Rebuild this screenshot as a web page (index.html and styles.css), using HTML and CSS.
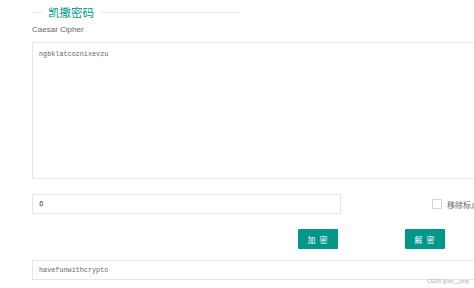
FILE: index.html
```html
<!DOCTYPE html>
<html lang="zh-CN">
<head>
    <meta charset="UTF-8">
    <meta name="viewport" content="width=device-width, initial-scale=1.0">
    <title>凯撒密码</title>
    <link rel="stylesheet" href="styles.css">
</head>
<body>
    <div class="page">
        <fieldset class="field-title">
            <legend>凯撒密码</legend>
        </fieldset>

        <label class="form-label" for="source">Caesar Cipher</label>
        <textarea id="source" class="text-box">ngbklatcoznixevzu</textarea>

        <div class="key-row">
            <input type="text" class="text-input key-input" value="6">
            <label class="check">
                <span class="check-box"></span>
                <span class="check-text">移除标点</span>
            </label>
        </div>

        <div class="btn-row">
            <button class="btn btn-encrypt">加 密</button>
            <button class="btn btn-decrypt">解 密</button>
        </div>

        <input type="text" class="text-input result-input" value="havefunwithcrypto">
    </div>

    <div class="watermark">CSDN @lxx__ying</div>
</body>
</html>
```

FILE: styles.css
```css
html, body {
    margin: 0;
    padding: 0;
    background-color: #fff;
    overflow: hidden;
}
body {
    font-family: 'Liberation Sans', Arial, 'Noto Sans CJK SC', sans-serif;
    width: 474px;
    height: 288px;
    position: relative;
}
.page {
    padding-left: 32px;
    width: 480px;
}
.field-title {
    margin: 3px 0 0;
    padding: 0;
    width: 208px;
    border: none;
    border-top: 1px solid #eee;
}
.field-title legend {
    margin-left: 11px;
    padding: 0 5px;
    font-size: 11.5px;
    line-height: 19px;
    color: #009688;
    font-family: 'Noto Sans CJK SC', sans-serif;
}
.form-label {
    display: block;
    margin-top: 3px;
    font-size: 8px;
    line-height: 10px;
    color: #666;
}
.text-box {
    display: block;
    box-sizing: border-box;
    margin-top: 7px;
    width: 460px;
    height: 137px;
    padding: 6px 6px;
    border: 1px solid #e6e6e6;
    resize: none;
    outline: none;
    font-family: 'Liberation Mono', monospace;
    font-size: 6.8px;
    line-height: 10px;
    color: #666;
}
.text-input {
    display: block;
    box-sizing: border-box;
    height: 20px;
    padding: 0 6px;
    border: 1px solid #e6e6e6;
    outline: none;
    font-family: 'Liberation Mono', monospace;
    font-size: 6.8px;
    color: #666;
}
.key-row {
    display: flex;
    align-items: center;
    margin-top: 15px;
}
.key-input {
    width: 309px;
    font-size: 7.5px;
    color: #444;
}
.check {
    display: flex;
    align-items: center;
    margin-left: 91px;
    white-space: nowrap;
}
.check-box {
    box-sizing: border-box;
    width: 10px;
    height: 10px;
    border: 1px solid #d2d2d2;
    border-radius: 1px;
}
.check-text {
    margin-left: 5px;
    font-size: 8px;
    color: #666;
    font-family: 'Noto Sans CJK SC', sans-serif;
}
.btn-row {
    display: flex;
    margin-top: 15px;
}
.btn {
    width: 40px;
    height: 20px;
    padding: 0;
    border: none;
    border-radius: 1px;
    background-color: #009688;
    color: #fff;
    font-size: 8px;
    letter-spacing: 1px;
    font-family: 'Noto Sans CJK SC', sans-serif;
    cursor: pointer;
}
.btn-encrypt {
    margin-left: 266px;
}
.btn-decrypt {
    margin-left: 67px;
}
.result-input {
    margin-top: 11px;
    width: 460px;
}
.watermark {
    position: absolute;
    left: 427px;
    top: 278px;
    font-size: 5px;
    color: #aaa;
    white-space: nowrap;
}
```
